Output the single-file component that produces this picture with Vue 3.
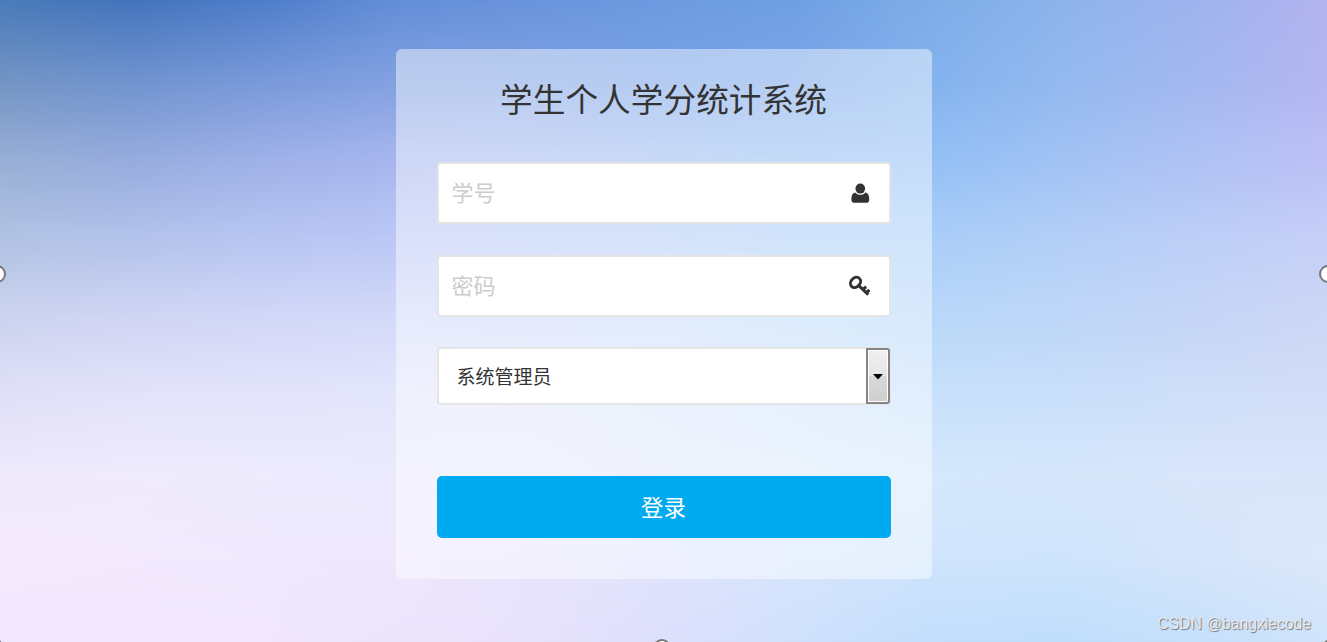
<script setup>
import { ref } from 'vue'

const studentNo = ref('')
const password = ref('')
const role = ref('系统管理员')
const roles = ['系统管理员']

// colour rows of the backdrop, from top to bottom
const rows = [
  ['#4a7bb9', '#4474bd', '#4f7eca', '#638ed8', '#6994dc', '#6c9ae0', '#70a0e4', '#7dade8', '#8db4ec', '#9eb3ee', '#b3b4f0'],
  ['#7394c4', '#7093cf', '#7999da', '#82a1e1', '#7fa1e4', '#78a2e8', '#7aa5e9', '#83b2ee', '#93b9ef', '#a3b8f0', '#b4b6f1'],
  ['#98afd5', '#97acde', '#9fb1e8', '#a7b6ee', '#a4b9f0', '#9dbbf2', '#94bef4', '#94c0f6', '#a1c2f4', '#afc2f4', '#bcc0f6'],
  ['#b2c3e4', '#b4c3eb', '#b8c6f2', '#bcc8f6', '#b8caf7', '#b3ccf6', '#accef7', '#aacef8', '#b3cff7', '#bdcff7', '#c6cff7'],
  ['#cdd4f0', '#d1d6f4', '#d3d8f8', '#d4daf9', '#cfdaf9', '#c9dcf9', '#c0dcf9', '#b9d8f9', '#bed7f8', '#c6d6f7', '#cdd7f6'],
  ['#e2e1f8', '#e4e4fa', '#e4e5fb', '#e4e7fc', '#e2e8fc', '#dce7fc', '#d2e5fb', '#c9e1fb', '#cae0fb', '#cfdff9', '#d3def8'],
  ['#efe9fc', '#f0eafd', '#edebfd', '#ebeafd', '#e8eafd', '#e2eafd', '#dceafc', '#d5e8fc', '#d6e7fb', '#d9e6fb', '#dae5fa'],
  ['#f5e9fd', '#f3e9fe', '#f0e8fd', '#eee7fd', '#e9e5fd', '#e0e4fd', '#d7e5fd', '#cfe4fd', '#cde4fc', '#d5e5fb', '#dce8fa'],
  ['#f0e6fd', '#f0e6fd', '#f0e6fd', '#ece4fc', '#e8e2fc', '#dddffc', '#cfe0fc', '#c2defc', '#bfdefc', '#c5e0fb', '#cfe3fb']
]

function rowStyle(colors, index) {
  const style = { background: `linear-gradient(90deg, ${colors.join(', ')})` }
  if (index > 0) {
    const step = 100 / (rows.length - 1)
    style.maskImage = `linear-gradient(transparent ${(index - 1) * step}%, #000 ${index * step}%)`
  }
  return style
}
</script>

<template>
  <main class="page">
    <div class="backdrop">
      <div
        v-for="(colors, index) in rows"
        :key="index"
        class="backdrop__row"
        :style="rowStyle(colors, index)"
      ></div>
    </div>

    <form class="login" @submit.prevent>
      <h1 class="login__title">学生个人学分统计系统</h1>

      <div class="field">
        <input type="text" v-model="studentNo" placeholder="学号" />
        <svg class="field__icon" viewBox="0 0 24 24">
          <ellipse cx="12.3" cy="7.6" rx="4.8" ry="5" />
          <path
            d="M7.2 11.4c1.2 1.5 3 2.3 5.1 2.3s3.9-.8 5.1-2.3c2.7.5 3.8 3 3.8 6.3v1c0 1.9-1 3.1-2.9 3.1H6.3c-1.9 0-2.9-1.2-2.9-3.1v-1c0-3.3 1.1-5.8 3.8-6.3z"
          />
        </svg>
      </div>

      <div class="field">
        <input type="password" v-model="password" placeholder="密码" />
        <svg class="field__icon field__icon--key" viewBox="0 0 24 24">
          <ellipse cx="7.5" cy="8.4" rx="5.6" ry="4.5" transform="rotate(-45 7.5 8.4)" />
          <path d="M10.8 11.7L20.3 20.6M15 15.3L18.2 12.8M18.3 18.5L21.5 16" />
        </svg>
      </div>

      <div class="role">
        <select v-model="role">
          <option v-for="item in roles" :key="item">{{ item }}</option>
        </select>
        <span class="role__arrow">
          <svg viewBox="0 0 10 6"><path d="M0 0h10L5 5.5z" /></svg>
        </span>
      </div>

      <button class="login__submit">登录</button>
    </form>

    <i class="handle handle--left"></i>
    <i class="handle handle--right"></i>
    <i class="handle handle--bottom"></i>
    <i class="handle handle--bottom-left"></i>
    <i class="handle handle--bottom-right"></i>
    <span class="watermark">CSDN @bangxiecode</span>
  </main>
</template>

<style>
body {
  margin: 0;
  overflow: hidden;
}
</style>

<style scoped>
.page {
  position: relative;
  display: flex;
  justify-content: center;
  align-items: flex-start;
  box-sizing: border-box;
  height: 642px;
  padding-top: 49px;
  overflow: hidden;
  color: #333;
  font-family: 'Noto Sans CJK SC', sans-serif;
}

.backdrop {
  position: absolute;
  inset: 0;
  display: grid;
}

.backdrop__row {
  grid-area: 1 / 1;
}

.login {
  position: relative;
  display: flex;
  flex-direction: column;
  box-sizing: border-box;
  width: 536px;
  height: 530px;
  padding: 0 41px;
  border-radius: 6px;
  background: rgba(255, 255, 255, 0.45);
}

.login__title {
  margin: 0;
  height: 113px;
  font-size: 32.7px;
  font-weight: 400;
  line-height: 98px;
  text-align: center;
  white-space: nowrap;
}

.field {
  display: flex;
  align-items: center;
  box-sizing: border-box;
  height: 62px;
  margin-bottom: 30.5px;
  padding: 0 17px 0 13px;
  border: 2px solid #e5e5e5;
  border-radius: 4px;
  background: #fff;
}

.field input {
  flex: 1;
  min-width: 0;
  padding: 0 0 4px;
  border: 0;
  outline: 0;
  background: none;
  font-family: inherit;
  font-size: 22px;
}

.field input::placeholder {
  color: #ccc;
}

.field__icon {
  width: 24px;
  height: 24px;
  fill: #333;
}

.field__icon--key {
  fill: none;
  stroke: #333;
  stroke-width: 3;
}

.role {
  display: flex;
  box-sizing: border-box;
  height: 58px;
  margin-bottom: 71px;
  border: 2px solid #e5e5e5;
  border-radius: 4px;
  background: #fff;
}

.role select {
  flex: 1;
  appearance: none;
  padding: 0 18px 2px;
  border: 0;
  outline: 0;
  background: none;
  color: #333;
  font-family: inherit;
  font-size: 19px;
}

.role__arrow {
  display: flex;
  justify-content: center;
  align-items: center;
  box-sizing: border-box;
  width: 24px;
  margin: -1px -1px -1px 0;
  border: 2px solid #858585;
  border-radius: 0 3px 3px 0;
  background: linear-gradient(#f0f0f0, #e5e5e5 50%, #d8d8d8 50%, #cfcfcf);
  box-shadow: inset 0 0 0 1px #fff;
}

.role__arrow svg {
  width: 10px;
  height: 6px;
  margin-top: 2px;
}

.login__submit {
  height: 62px;
  padding: 0 0 2px;
  border: 0;
  border-radius: 5px;
  background: #00aaf0;
  color: #fff;
  font-family: inherit;
  font-size: 22.5px;
  line-height: 60px;
}

.handle {
  position: absolute;
  box-sizing: border-box;
  width: 18px;
  height: 18px;
  border: 2px solid #777;
  border-radius: 50%;
  background: #fff;
}

.handle--left {
  top: 265px;
  left: -12px;
}

.handle--right {
  top: 265px;
  right: -10px;
}

.handle--bottom {
  bottom: -15px;
  left: 653px;
}

.handle--bottom-left {
  bottom: -15px;
  left: -14px;
}

.handle--bottom-right {
  right: -13px;
  bottom: -15px;
}

.watermark {
  position: absolute;
  right: 16px;
  bottom: 8px;
  color: #e4e9f0;
  font-family: 'Liberation Sans', sans-serif;
  font-size: 15.7px;
  line-height: 20px;
  text-shadow: 1px 1px 1px #777;
}
</style>
